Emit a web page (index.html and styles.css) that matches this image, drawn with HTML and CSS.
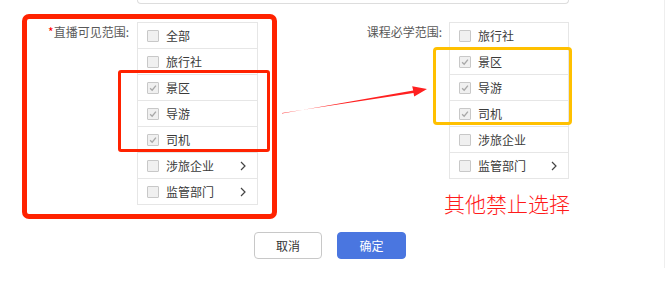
FILE: index.html
```html
<!DOCTYPE html>
<html>
<head>
	<meta charset="UTF-8" />
	<title>直播可见范围</title>
	<link rel="stylesheet" href="styles.css">
</head>
<body>
<div class="page">
    <div class="top_input"></div>

    <div class="fields">
        <div class="field">
            <div class="field_label"><span class="star">*</span>直播可见范围:</div>
            <div class="list list_left">
                <div class="item"><span class="cbox"></span>全部</div>
                <div class="item"><span class="cbox"></span>旅行社</div>
                <div class="item"><span class="cbox checked"><svg viewBox="0 0 12 12"><polyline points="2.5,6.2 5,8.6 9.5,3.2"/></svg></span>景区</div>
                <div class="item"><span class="cbox checked"><svg viewBox="0 0 12 12"><polyline points="2.5,6.2 5,8.6 9.5,3.2"/></svg></span>导游</div>
                <div class="item"><span class="cbox checked"><svg viewBox="0 0 12 12"><polyline points="2.5,6.2 5,8.6 9.5,3.2"/></svg></span>司机</div>
                <div class="item"><span class="cbox"></span>涉旅企业<svg class="chev" viewBox="0 0 6 10"><polyline points="1,1 5,5 1,9"/></svg></div>
                <div class="item"><span class="cbox"></span>监管部门<svg class="chev" viewBox="0 0 6 10"><polyline points="1,1 5,5 1,9"/></svg></div>
            </div>
        </div>

        <div class="field field_right">
            <div class="field_label label_right">课程必学范围:</div>
            <div class="col">
                <div class="list list_right">
                    <div class="item"><span class="cbox"></span>旅行社</div>
                    <div class="item"><span class="cbox checked"><svg viewBox="0 0 12 12"><polyline points="2.5,6.2 5,8.6 9.5,3.2"/></svg></span>景区</div>
                    <div class="item"><span class="cbox checked"><svg viewBox="0 0 12 12"><polyline points="2.5,6.2 5,8.6 9.5,3.2"/></svg></span>导游</div>
                    <div class="item"><span class="cbox checked"><svg viewBox="0 0 12 12"><polyline points="2.5,6.2 5,8.6 9.5,3.2"/></svg></span>司机</div>
                    <div class="item"><span class="cbox"></span>涉旅企业</div>
                    <div class="item"><span class="cbox"></span>监管部门<svg class="chev" viewBox="0 0 6 10"><polyline points="1,1 5,5 1,9"/></svg></div>
                </div>
                <div class="note">其他禁止选择</div>
            </div>
        </div>
    </div>

    <div class="actions">
        <button class="btn">取消</button>
        <button class="btn btn_primary">确定</button>
    </div>

    <div class="watermark">CSDN @潞</div>

    <!-- annotations -->
    <div class="mark mark_outer"></div>
    <div class="mark mark_inner"></div>
    <div class="mark mark_yellow"></div>
    <svg class="arrow" width="672" height="287" viewBox="0 0 672 287">
        <polygon points="282,113.6 413.2,90.6 412.2,86.2 427,89 414.2,96.4 413.5,93 282,113"/>
    </svg>
</div>
</body>
</html>
```

FILE: styles.css
```css
body{
    margin: 0;
    font-family: "Noto Sans CJK SC", "Noto Sans", sans-serif;
    background: #fff;
}

.page{
    position: relative;
    width: 664px;
    height: 268px;
    border-right: 1px solid #eee;
}

.top_input{
    margin-left: 137px;
    width: 430px;
    height: 3px;
    border: 1px solid #ddd;
    border-top: none;
    border-radius: 0 0 5px 5px;
}

.fields{
    display: flex;
    margin-top: 18px;
}

.field{
    display: flex;
    align-items: flex-start;
}

.field_label{
    width: 129px;
    text-align: right;
    font-size: 12px;
    line-height: 20px;
    color: #595959;
}

.field_label .star{
    color: #f00;
}

.field_right{
    margin-left: 84px;
}

.label_right{
    width: 100px;
}

.list{
    box-sizing: border-box;
    border: 1px solid #e6e6e6;
    border-bottom: none;
}

.list_left{
    margin-left: 8px;
    width: 121px;
}

.list_right{
    margin-left: 7px;
    width: 120px;
}

.item{
    display: flex;
    align-items: center;
    height: 25px;
    border-bottom: 1px solid #e6e6e6;
    padding-left: 9px;
    font-size: 12px;
    color: #3a3a3a;
}

.cbox{
    box-sizing: border-box;
    width: 12px;
    height: 12px;
    margin-right: 7px;
    border: 1px solid #c8c8c8;
    background: #f0f0f0;
    border-radius: 1px;
}

.cbox svg{
    display: block;
    width: 10px;
    height: 10px;
    fill: none;
    stroke: #a8a8a8;
    stroke-width: 1.6;
}

.chev{
    width: 6px;
    height: 10px;
    margin-left: auto;
    margin-right: 11px;
    fill: none;
    stroke: #444;
    stroke-width: 1.2;
}

.note{
    margin-top: 12px;
    margin-left: 2px;
    font-size: 21px;
    font-weight: 300;
    line-height: 24px;
    color: #ff1a1a;
}

.actions{
    display: flex;
    gap: 15px;
    padding-left: 254px;
    margin-top: 17px;
}

.btn{
    box-sizing: border-box;
    width: 68px;
    height: 27px;
    border: 1px solid #c8c8c8;
    border-radius: 4px;
    background: #fff;
    font-family: inherit;
    font-size: 12px;
    color: #333;
    padding: 0;
}

.btn_primary{
    width: 69px;
    border-color: #4a76e0;
    background: #4a76e0;
    color: #fff;
}

.watermark{
    position: absolute;
    right: 14px;
    top: 266px;
    font-size: 9px;
    color: #999;
}

.mark{
    position: absolute;
    box-sizing: border-box;
}

.mark_outer{
    left: 22px;
    top: 14px;
    width: 255px;
    height: 205px;
    border: 5px solid #ff2200;
    border-radius: 7px;
}

.mark_inner{
    left: 118px;
    top: 70px;
    width: 152px;
    height: 82px;
    border: 3px solid #ff2200;
    border-radius: 3px;
}

.mark_yellow{
    left: 433px;
    top: 47px;
    width: 139px;
    height: 78px;
    border: 3px solid #ffc000;
    border-radius: 4px;
}

.arrow{
    position: absolute;
    left: 0;
    top: 0;
    fill: #ff2020;
}
```
